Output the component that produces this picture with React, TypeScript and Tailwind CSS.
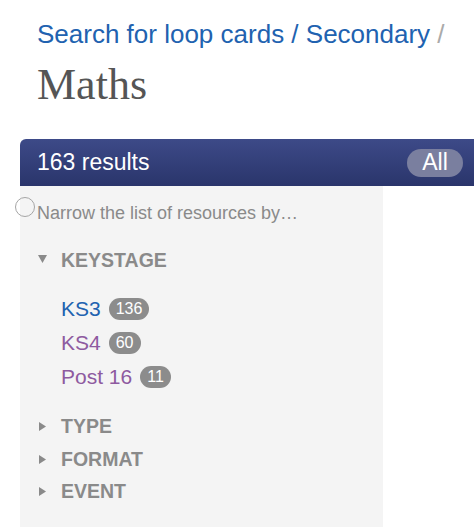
import React from 'react';

const sans = { fontFamily: '"Liberation Sans", Arial, sans-serif' };

const Badge = ({ n }: { n: number }) => (
  <span className="ml-[8px] inline-flex items-center justify-center rounded-full bg-[#8c8c8c] px-[7px] h-[22px] text-[16px] leading-none text-white">
    {n}
  </span>
);

const Section = ({ label, open }: { label: string; open?: boolean }) => (
  <div className="flex items-center h-[32.5px]">
    <span className="w-[24px] flex items-center">
      {open ? (
        <svg width="9" height="8" viewBox="0 0 9 8" className="ml-[1px] mb-[3px]">
          <path d="M0 0H9L4.5 8Z" fill="#8a8a8a" />
        </svg>
      ) : (
        <svg width="7" height="9" viewBox="0 0 7 9" className="ml-[2px]">
          <path d="M0 0L7 4.5L0 9Z" fill="#8a8a8a" />
        </svg>
      )}
    </span>
    <span className="text-[19.5px] font-bold text-[#8a8a8a]">{label}</span>
  </div>
);

export default function App() {
  return (
    <div className="w-[474px] h-[529px] overflow-hidden bg-white" style={sans}>
      <div className="pl-[37px] pt-[18px]">
        <div className="text-[26px] leading-[32px] whitespace-nowrap">
          <span className="text-[#2162b0]">Search for loop cards / Secondary </span>
          <span className="text-[#aaaaaa]">/</span>
        </div>
        <h1
          className="mt-[13px] text-[44px] leading-[44px] text-[#555555]"
          style={{ fontFamily: '"Liberation Serif", "Times New Roman", serif' }}
        >
          Maths
        </h1>
      </div>

      <div className="ml-[20px] mt-[32px] flex items-center justify-between h-[47px] rounded-tl-[6px] bg-gradient-to-b from-[#3d4a88] to-[#2a356b] pl-[17px] pr-[11px]">
        <span className="text-[23px] text-white">163 results</span>
        <span className="flex items-center justify-center h-[28px] w-[56px] rounded-full bg-[#7a7f9f] text-[23px] text-white">
          All
        </span>
      </div>

      <div className="relative ml-[20px] w-[363px] h-[341px] bg-[#f4f4f4] pl-[17px]">
        <span className="absolute left-[-5px] top-[11px] w-[20px] h-[20px] rounded-full border border-[#a5a5a5]" />
        <div className="pt-[16px] text-[18px] leading-[22px] text-[#8a8a8a] whitespace-nowrap">Narrow the list of resources by…</div>

        <div className="mt-[20px]">
          <Section label="KEYSTAGE" open />
        </div>

        <div className="mt-[15px] pl-[24px] flex flex-col">
          <div className="flex items-center h-[34px] text-[21px] text-[#2162b0]">
            KS3<Badge n={136} />
          </div>
          <div className="flex items-center h-[34px] text-[21px] text-[#8e5aa0]">
            KS4<Badge n={60} />
          </div>
          <div className="flex items-center h-[34px] text-[21px] text-[#8e5aa0]">
            Post 16<Badge n={11} />
          </div>
        </div>

        <div className="mt-[17px] flex flex-col">
          <Section label="TYPE" />
          <Section label="FORMAT" />
          <Section label="EVENT" />
        </div>
      </div>
    </div>
  );
}
